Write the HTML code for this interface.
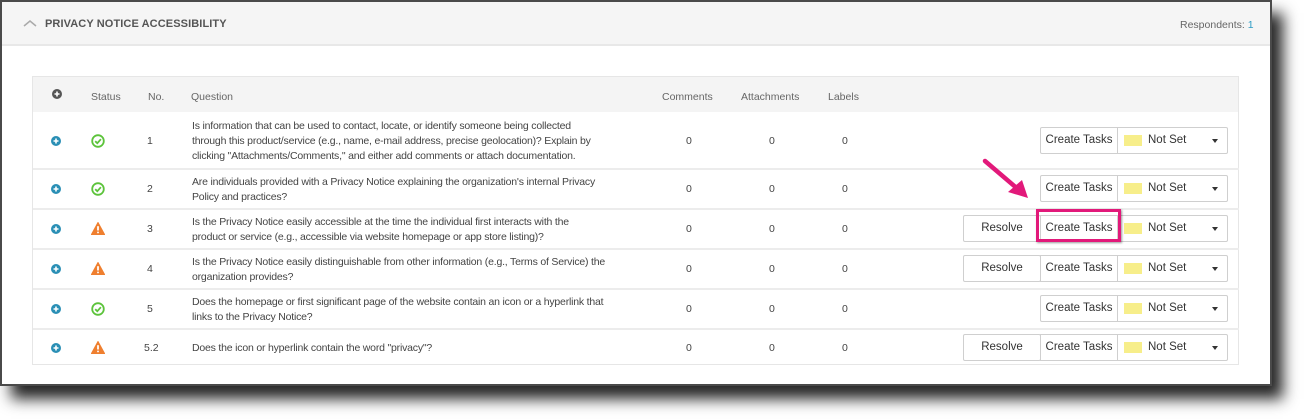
<!DOCTYPE html>
<html><head><meta charset="utf-8"><style>
*{box-sizing:border-box;margin:0;padding:0}
body{width:1305px;height:419px;background:#fff;position:relative;overflow:hidden;font-family:"Liberation Sans",sans-serif;color:#444}
#win{position:absolute;left:0;top:0;width:1272px;height:386px;background:#fff;border:2px solid #4a4a4a;box-shadow:11px 13px 14px rgba(0,0,0,.85)}
#hdr{position:absolute;left:0;top:0;width:1268px;height:44px;background:#f5f5f5;border-bottom:2px solid #e8e8e8}
.t{position:absolute;white-space:nowrap}
#tbl{position:absolute;left:32px;top:76px;width:1207px;height:289px;border:1px solid #e6e6e6}
.hrow{position:absolute;left:0;top:0;width:1205px;height:35px;background:#f4f4f4}
.q{position:absolute;left:159px;font-size:10.5px;line-height:15px;letter-spacing:-0.2px;color:#444;white-space:nowrap}
.n{position:absolute;font-size:10.5px;color:#444}
.btn{position:absolute;height:27px;border:1px solid #cfcfcf;border-radius:2px;background:#fff;font-size:11.5px;color:#333;text-align:center;line-height:25px}
.sel{position:absolute;height:27px;width:111px;border:1px solid #cfcfcf;border-radius:0 2px 2px 0;background:#fff;font-size:11.5px;color:#333;line-height:25px}
.sel .sw{position:absolute;left:6px;top:7px;width:18px;height:11px;background:#f7ee8a}
.sel .tx{position:absolute;left:30px;top:0}
.sel .ca{position:absolute;right:9px;top:11px;border-left:3.5px solid transparent;border-right:3.5px solid transparent;border-top:4px solid #333}
</style></head><body>
<div id="win">
 <div id="hdr">
  <svg class="t" style="left:21px;top:17px" width="14" height="9"><path d="M1 7L7 2L13 7" stroke="#aaa" stroke-width="1.5" fill="none"/></svg>
  <div class="t" style="left:43px;top:16px;font-size:11px;font-weight:bold;color:#555;letter-spacing:0.1px">PRIVACY NOTICE ACCESSIBILITY</div>
  <div class="t" style="left:1178px;top:17px;font-size:10.5px;color:#666">Respondents: <span style="color:#2e9cc5">1</span></div>
 </div>
</div>
<div id="tbl">
 <div class="hrow">
  <svg class="t" style="left:19px;top:12px" width="10" height="10"><circle cx="5" cy="5" r="5" fill="#555"/><path d="M5 2.5V7.5M2.5 5H7.5" stroke="#fff" stroke-width="1.6"/></svg>
  <div class="t" style="left:58px;top:14px;font-size:10.5px;color:#666">Status</div>
  <div class="t" style="left:115px;top:14px;font-size:10.5px;color:#666">No.</div>
  <div class="t" style="left:158px;top:14px;font-size:10.5px;color:#666">Question</div>
  <div class="t" style="left:629px;top:14px;font-size:10.5px;color:#666">Comments</div>
  <div class="t" style="left:708px;top:14px;font-size:10.5px;color:#666">Attachments</div>
  <div class="t" style="left:795px;top:14px;font-size:10.5px;color:#666">Labels</div>
 </div>
</div>
<div id="rows"></div>
<script>
var rows=[
 {y:112,h:57,s:'ok',no:'1',q:['Is information that can be used to contact, locate, or identify someone being collected','through this product/service (e.g., name, e-mail address, precise geolocation)? Explain by','clicking "Attachments/Comments," and either add comments or attach documentation.'],r:0},
 {y:169,h:40,s:'ok',no:'2',q:["Are individuals provided with a Privacy Notice explaining the organization's internal Privacy",'Policy and practices?'],r:0},
 {y:209,h:40,s:'w',no:'3',q:['Is the Privacy Notice easily accessible at the time the individual first interacts with the','product or service (e.g., accessible via website homepage or app store listing)?'],r:1},
 {y:249,h:40,s:'w',no:'4',q:['Is the Privacy Notice easily distinguishable from other information (e.g., Terms of Service) the','organization provides?'],r:1},
 {y:289,h:40,s:'ok',no:'5',q:['Does the homepage or first significant page of the website contain an icon or a hyperlink that','links to the Privacy Notice?'],r:0},
 {y:329,h:37,s:'w',no:'5.2',q:['Does the icon or hyperlink contain the word "privacy"?'],r:1}
];
var h='';
rows.forEach(function(r,i){
 var c=r.y+r.h/2;
 if(i>0)h+='<div style="position:absolute;left:33px;top:'+(r.y-1)+'px;width:1206px;height:2px;background:#ececec"></div>';
 h+='<svg class="t" style="left:51px;top:'+(c-5)+'px" width="10" height="10"><circle cx="5" cy="5" r="5" fill="#2a8fb5"/><path d="M5 2.5V7.5M2.5 5H7.5" stroke="#fff" stroke-width="1.6"/></svg>';
 if(r.s=='ok')h+='<svg class="t" style="left:91px;top:'+(c-7)+'px" width="14" height="14"><circle cx="7" cy="7" r="5.8" stroke="#5cc33b" stroke-width="1.8" fill="none"/><path d="M4.2 7.2L6.3 9.2L9.9 5.2" stroke="#5cc33b" stroke-width="1.8" fill="none"/></svg>';
 else h+='<svg class="t" style="left:91px;top:'+(c-7)+'px" width="14" height="13"><path d="M7 0.5L13.6 12.5H0.4Z" fill="#ef7f2f" stroke="#ef7f2f" stroke-linejoin="round"/><path d="M7 4.2V8.5" stroke="#fff" stroke-width="1.8"/><circle cx="7" cy="10.4" r="0.95" fill="#fff"/></svg>';
 h+='<div class="n" style="left:'+(r.no.length>1?144:147)+'px;top:'+(c-6)+'px">'+r.no+'</div>';
 var qt=c-r.q.length*7.5+1;
 h+='<div class="q" style="left:192px;top:'+qt+'px">'+r.q.join('<br>').replace(/"/g,'&quot;')+'</div>';
 [686,769,842].forEach(function(x){h+='<div class="n" style="left:'+x+'px;top:'+(c-6)+'px">0</div>';});
 var by=c-14;
 if(r.r)h+='<div class="btn" style="left:963px;top:'+by+'px;width:78px">Resolve</div>';
 h+='<div class="btn" style="left:1040px;top:'+by+'px;width:78px;border-radius:'+(r.r?'0':'2px 0 0 2px')+'">Create Tasks</div>';
 h+='<div class="sel" style="left:1117px;top:'+by+'px"><div class="sw"></div><div class="tx">Not Set</div><div class="ca"></div></div>';
});
h+='<div style="position:absolute;left:1036px;top:209px;width:85px;height:33px;border:3px solid #e2197a;box-shadow:1px 1px 2px rgba(0,0,0,.4)"></div>';
h+='<svg class="t" style="left:975px;top:152px" width="60" height="50"><path d="M10 9L44 38" stroke="#e2197a" stroke-width="4.5" stroke-linecap="round"/><path d="M53 46L33 40L47 28Z" fill="#e2197a"/></svg>';
document.getElementById('rows').innerHTML=h;
</script>
</body></html>
